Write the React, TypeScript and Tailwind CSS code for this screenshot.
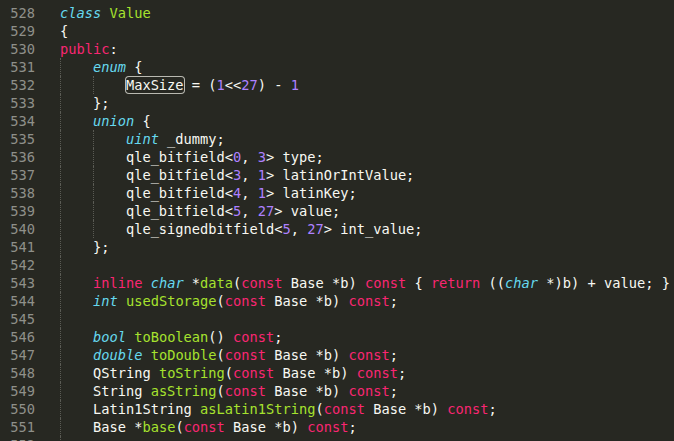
import React from "react";

type Tok = [string, string?];

const K = "text-[#f92672]"; // keyword
const T = "text-[#66d9ef] italic"; // storage type
const F = "text-[#a6e22e]"; // function / class name
const N = "text-[#ae81ff]"; // number
const BOX = "box";

type Line = { n: number; guides: number; indent: number; toks: Tok[] };

const bf = (a: string, b: string, name: string, fn = "qle_bitfield"): Tok[] => [
  [fn + "<"],
  [a, N],
  [", "],
  [b, N],
  ["> " + name + ";"],
];

const method = (ret: Tok[], name: string): Tok[] => [
  ...ret,
  [name, F],
  ["("],
  ["const", K],
  [" Base *b) "],
  ["const", K],
  [";"],
];

const lines: Line[] = [
  { n: 528, guides: 0, indent: 0, toks: [["class", T], [" "], ["Value", F]] },
  { n: 529, guides: 0, indent: 0, toks: [["{"]] },
  { n: 530, guides: 0, indent: 0, toks: [["public", K], [":"]] },
  { n: 531, guides: 1, indent: 1, toks: [["enum", T], [" {"]] },
  {
    n: 532,
    guides: 2,
    indent: 2,
    toks: [["MaxSize", BOX], [" = ("], ["1", N], ["<<"], ["27", N], [") - "], ["1", N]],
  },
  { n: 533, guides: 1, indent: 1, toks: [["};"]] },
  { n: 534, guides: 1, indent: 1, toks: [["union", T], [" {"]] },
  { n: 535, guides: 2, indent: 2, toks: [["uint", T], [" _dummy;"]] },
  { n: 536, guides: 2, indent: 2, toks: bf("0", "3", "type") },
  { n: 537, guides: 2, indent: 2, toks: bf("3", "1", "latinOrIntValue") },
  { n: 538, guides: 2, indent: 2, toks: bf("4", "1", "latinKey") },
  { n: 539, guides: 2, indent: 2, toks: bf("5", "27", "value") },
  { n: 540, guides: 2, indent: 2, toks: bf("5", "27", "int_value", "qle_signedbitfield") },
  { n: 541, guides: 1, indent: 1, toks: [["};"]] },
  { n: 542, guides: 1, indent: 1, toks: [] },
  {
    n: 543,
    guides: 1,
    indent: 1,
    toks: [
      ["inline", K],
      [" "],
      ["char", T],
      [" *"],
      ["data", F],
      ["("],
      ["const", K],
      [" Base *b) "],
      ["const", K],
      [" { "],
      ["return", K],
      [" (("],
      ["char", T],
      [" *)b) + value; }"],
    ],
  },
  { n: 544, guides: 1, indent: 1, toks: method([["int", T], [" "]], "usedStorage") },
  { n: 545, guides: 1, indent: 1, toks: [] },
  {
    n: 546,
    guides: 1,
    indent: 1,
    toks: [["bool", T], [" "], ["toBoolean", F], ["() "], ["const", K], [";"]],
  },
  { n: 547, guides: 1, indent: 1, toks: method([["double", T], [" "]], "toDouble") },
  { n: 548, guides: 1, indent: 1, toks: method([["QString "]], "toString") },
  { n: 549, guides: 1, indent: 1, toks: method([["String "]], "asString") },
  { n: 550, guides: 1, indent: 1, toks: method([["Latin1String "]], "asLatin1String") },
  { n: 551, guides: 1, indent: 1, toks: method([["Base *"]], "base") },
  { n: 552, guides: 1, indent: 1, toks: [] },
];

function CodeLine({ line }: { line: Line }) {
  const units = Math.max(line.guides, line.indent);
  return (
    <div className="flex h-[18px] items-stretch leading-[18px] whitespace-pre">
      <div className="w-[35px] shrink-0 text-right text-[#8f908a]">{line.n}</div>
      <div className="ml-[25px] flex min-w-0">
        {Array.from({ length: units }).map((_, i) =>
          i < line.guides ? (
            <span key={i} className="block h-[18px] w-[4ch] shrink-0 border-l border-dotted border-[#5a5b54]" />
          ) : (
            <span key={i} className="block w-[4ch] shrink-0" />
          )
        )}
        <span className="text-[#f8f8f2]">
          {line.toks.map(([text, cls], i) =>
            cls === BOX ? (
              <span key={i} className="rounded-[3px] ring-1 ring-[#b9b9b1]">
                {text}
              </span>
            ) : (
              <span key={i} className={cls}>
                {text}
              </span>
            )
          )}
        </span>
      </div>
    </div>
  );
}

export default function App() {
  return (
    <div
      className="h-[441px] w-[674px] overflow-hidden bg-[#272822] pt-[4px] text-[13.7px]"
      style={{ fontFamily: '"DejaVu Sans Mono", "Liberation Mono", monospace' }}
    >
      {lines.map((l) => (
        <CodeLine key={l.n} line={l} />
      ))}
    </div>
  );
}
